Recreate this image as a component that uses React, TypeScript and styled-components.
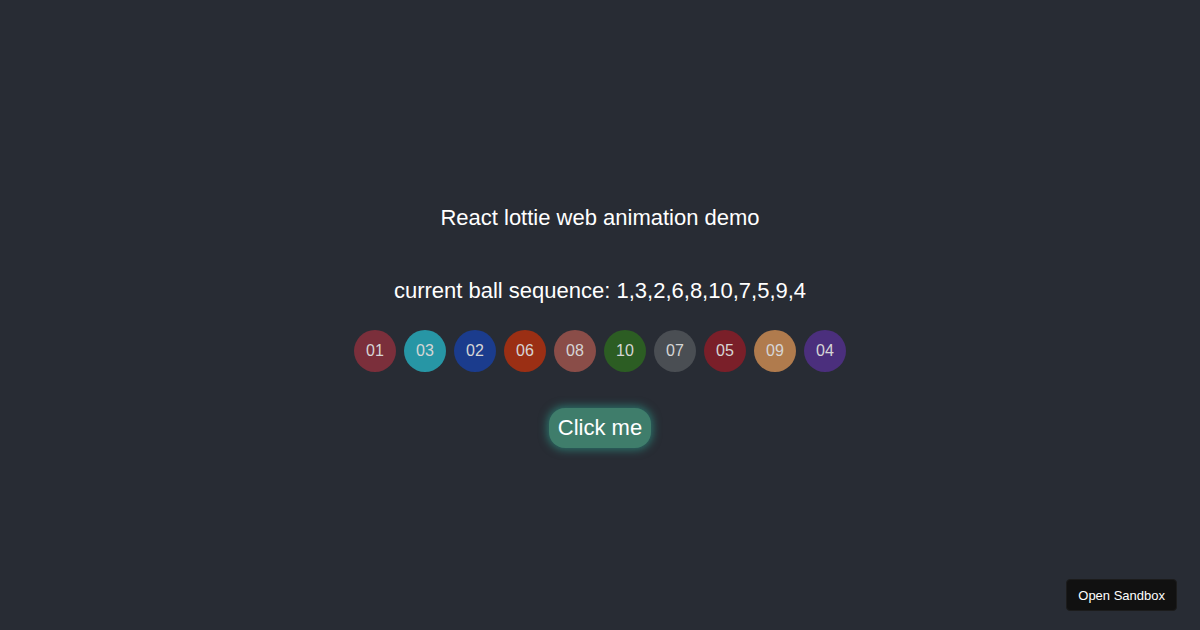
import React from "react";
import styled, { createGlobalStyle } from "styled-components";

const GlobalStyle = createGlobalStyle`
  html, body {
    margin: 0;
    padding: 0;
    background: #282c34;
  }
  body {
    font-family: "Liberation Sans", Arial, sans-serif;
    color: #ffffff;
  }
`;

const Page = styled.div`
  position: relative;
  width: 1200px;
  height: 630px;
  display: flex;
  flex-direction: column;
  align-items: center;
  padding-top: 205px;
  box-sizing: border-box;
`;

const Title = styled.div`
  font-size: 22px;
  line-height: 26px;
`;

const Sequence = styled.div`
  font-size: 22px;
  line-height: 26px;
  margin-top: 47px;
`;

const BallRow = styled.div`
  display: flex;
  gap: 8px;
  margin-top: 26px;
`;

const Ball = styled.div<{ $color: string }>`
  width: 42px;
  height: 42px;
  border-radius: 50%;
  background: ${(p) => p.$color};
  display: flex;
  align-items: center;
  justify-content: center;
  font-family: "Liberation Sans", Arial, sans-serif;
  font-size: 16px;
  color: #d6d6d6;
`;

const ClickButton = styled.button`
  margin-top: 36px;
  height: 40px;
  padding: 0 9px;
  border: none;
  border-radius: 16px;
  background: #3f7d6b;
  color: #ffffff;
  font-family: "Liberation Sans", Arial, sans-serif;
  font-size: 22px;
  box-shadow: 0 0 8px 2px rgba(45, 170, 150, 0.55);
  cursor: pointer;
`;

const SandboxButton = styled.button`
  position: absolute;
  right: 23px;
  bottom: 19px;
  height: 32px;
  padding: 0 11px;
  border: 1px solid #1c1c1c;
  border-radius: 4px;
  background: #111111;
  color: #ffffff;
  font-family: "Liberation Sans", Arial, sans-serif;
  font-size: 13px;
`;

const balls = [
  { n: "01", c: "#7b2f3b" },
  { n: "03", c: "#2796a5" },
  { n: "02", c: "#1b3c8d" },
  { n: "06", c: "#9b2f14" },
  { n: "08", c: "#8a4d48" },
  { n: "10", c: "#2c5d23" },
  { n: "07", c: "#4a4e53" },
  { n: "05", c: "#7a1f29" },
  { n: "09", c: "#b07b4d" },
  { n: "04", c: "#4b2f7d" },
];

const App = () => {
  return (
    <>
      <GlobalStyle />
      <Page>
        <Title>React lottie web animation demo</Title>
        <Sequence>current ball sequence: 1,3,2,6,8,10,7,5,9,4</Sequence>
        <BallRow>
          {balls.map((b) => (
            <Ball key={b.n} $color={b.c}>
              {b.n}
            </Ball>
          ))}
        </BallRow>
        <ClickButton>Click me</ClickButton>
        <SandboxButton>Open Sandbox</SandboxButton>
      </Page>
    </>
  );
};

export default App;
